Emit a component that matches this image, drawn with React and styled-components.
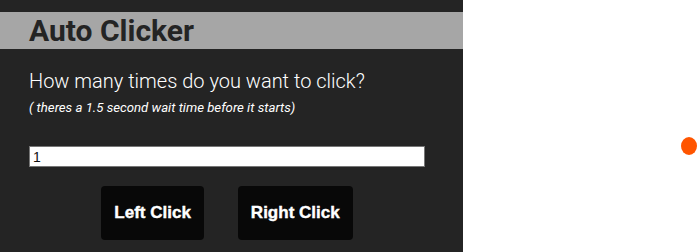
import React from 'react';
import styled, { createGlobalStyle } from 'styled-components';

const GlobalStyle = createGlobalStyle`
  html, body {
    margin: 0;
    padding: 0;
    background: #ffffff;
  }
  body {
    width: 697px;
    height: 252px;
    overflow: hidden;
    position: relative;
  }
`;

const Panel = styled.div`
  width: 463px;
  height: 252px;
  background: #242424;
  padding-top: 12px;
  box-sizing: border-box;
`;

const TitleBar = styled.div`
  height: 37px;
  background: #a6a6a6;
  padding-left: 29px;
`;

const Title = styled.h1`
  margin: 0;
  font-family: Roboto, 'Liberation Sans', sans-serif;
  font-weight: 700;
  font-size: 30px;
  line-height: 37px;
  color: #242424;
`;

const Content = styled.div`
  width: 396px;
  padding-left: 29px;
  display: flex;
  flex-direction: column;
`;

const Question = styled.h2`
  margin: 20px 0 0;
  font-family: Roboto, 'Liberation Sans', sans-serif;
  font-weight: 300;
  font-size: 20px;
  line-height: 24px;
  color: #ffffff;
`;

const Note = styled.p`
  margin: 7px 0 0;
  font-family: Roboto, 'Liberation Sans', sans-serif;
  font-weight: 400;
  font-style: italic;
  font-size: 13.2px;
  line-height: 16px;
  color: #ffffff;
`;

const CountInput = styled.input`
  margin-top: 30px;
  width: 396px;
  height: 21px;
  box-sizing: border-box;
  border: 1px solid #767676;
  padding: 0 3px;
  font-family: 'Liberation Sans', Arial, sans-serif;
  font-size: 14px;
  color: #111111;
  background: #ffffff;
  outline: none;
`;

const ButtonRow = styled.div`
  display: flex;
  justify-content: center;
  gap: 34px;
  margin-top: 19px;
`;

const ClickButton = styled.button`
  height: 54px;
  padding: 0 13px;
  border: none;
  border-radius: 4px;
  background: #080808;
  color: #ffffff;
  font-family: 'Liberation Sans', Arial, sans-serif;
  font-weight: 700;
  font-size: 17px;
  -webkit-text-stroke: 0.4px #ffffff;
  cursor: pointer;
`;

const Dot = styled.div`
  position: absolute;
  left: 681px;
  top: 137px;
  width: 16px;
  height: 18px;
  border-radius: 50%;
  background: #ff5500;
`;

export default function App() {
  return (
    <>
      <GlobalStyle />
      <Panel>
        <TitleBar>
          <Title>Auto Clicker</Title>
        </TitleBar>
        <Content>
          <Question>How many times do you want to click?</Question>
          <Note>( theres a 1.5 second wait time before it starts)</Note>
          <CountInput type="text" defaultValue="1" />
          <ButtonRow>
            <ClickButton>Left Click</ClickButton>
            <ClickButton>Right Click</ClickButton>
          </ButtonRow>
        </Content>
      </Panel>
      <Dot />
    </>
  );
}
